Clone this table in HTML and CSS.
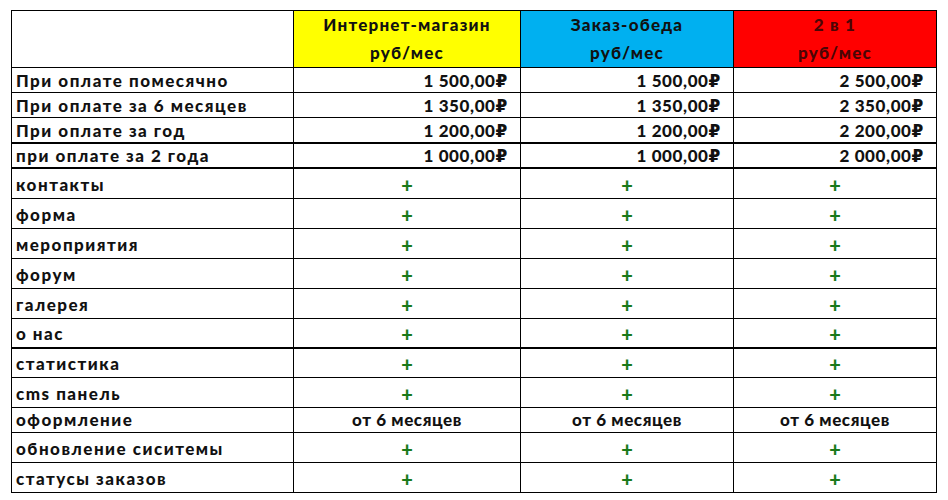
FILE: index.html
```html
<!DOCTYPE html>
<html lang="ru">
<head>
<meta charset="utf-8">
<link rel="stylesheet" href="styles.css">
</head>
<body>
<table class="price">
  <colgroup>
    <col class="c-label"><col class="c-shop"><col class="c-food"><col class="c-both">
  </colgroup>
  <thead>
    <tr class="head">
      <th></th>
      <th class="h-shop"><div>Интернет-магазин</div><div>руб/мес</div></th>
      <th class="h-food"><div>Заказ-обеда</div><div>руб/мес</div></th>
      <th class="h-both"><div>2 в 1</div><div>руб/мес</div></th>
    </tr>
  </thead>
  <tbody>
    <tr class="pr"><td>При оплате помесячно</td><td class="num">1 500,00₽</td><td class="num">1 500,00₽</td><td class="num">2 500,00₽</td></tr>
    <tr class="pr"><td>При оплате за 6 месяцев</td><td class="num">1 350,00₽</td><td class="num">1 350,00₽</td><td class="num">2 350,00₽</td></tr>
    <tr class="pr"><td>При оплате за год</td><td class="num">1 200,00₽</td><td class="num">1 200,00₽</td><td class="num">2 200,00₽</td></tr>
    <tr class="pr pr-thick thick-top thick-bottom"><td>при оплате за 2 года</td><td class="num">1 000,00₽</td><td class="num">1 000,00₽</td><td class="num">2 000,00₽</td></tr>
    <tr class="ft"><td>контакты</td><td class="yes">+</td><td class="yes">+</td><td class="yes">+</td></tr>
    <tr class="ft"><td>форма</td><td class="yes">+</td><td class="yes">+</td><td class="yes">+</td></tr>
    <tr class="ft"><td>мероприятия</td><td class="yes">+</td><td class="yes">+</td><td class="yes">+</td></tr>
    <tr class="ft"><td>форум</td><td class="yes">+</td><td class="yes">+</td><td class="yes">+</td></tr>
    <tr class="ft"><td>галерея</td><td class="yes">+</td><td class="yes">+</td><td class="yes">+</td></tr>
    <tr class="ft ft-short thick-bottom"><td>о нас</td><td class="yes">+</td><td class="yes">+</td><td class="yes">+</td></tr>
    <tr class="ft ft-short"><td>статистика</td><td class="yes">+</td><td class="yes">+</td><td class="yes">+</td></tr>
    <tr class="ft"><td>cms панель</td><td class="yes">+</td><td class="yes">+</td><td class="yes">+</td></tr>
    <tr class="ft ft-mid"><td>оформление</td><td class="txt">от 6 месяцев</td><td class="txt">от 6 месяцев</td><td class="txt">от 6 месяцев</td></tr>
    <tr class="ft"><td>обновление сиситемы</td><td class="yes">+</td><td class="yes">+</td><td class="yes">+</td></tr>
    <tr class="ft"><td>статусы заказов</td><td class="yes">+</td><td class="yes">+</td><td class="yes">+</td></tr>
  </tbody>
</table>
</body>
</html>
```

FILE: styles.css
```css
html, body {
  margin: 0;
  padding: 0;
  background: #ffffff;
}

body {
  font-family: "Lato", "DejaVu Sans", sans-serif;
  font-weight: 900;
  font-size: 17px;
  color: #111111;
}

.price {
  margin: 10px 0 0 11px;
  border-collapse: collapse;
  table-layout: fixed;
  width: 925px;
}

.c-label { width: 282px; }
.c-shop { width: 227px; }
.c-food { width: 213px; }
.c-both { width: 203px; }

.price th,
.price td {
  border: 1px solid #000000;
  padding: 0;
  line-height: 20px;
  vertical-align: bottom;
  overflow: hidden;
  white-space: nowrap;
}

.head th {
  height: 52px;
  font-weight: 900;
  text-align: center;
  vertical-align: middle;
  line-height: 28px;
  letter-spacing: 1.2px;
}

.h-shop { background: #ffff00; }
.h-food { background: #00b0f0; }
.h-both { background: #ff0000; color: #4a0505; }

.price td:first-child {
  padding-left: 4px;
  letter-spacing: 1.5px;
}

.pr td {
  height: 23px;
  padding-bottom: 1px;
}

.pr-thick td { height: 22px; }

.num {
  text-align: right;
  padding-right: 12px !important;
  letter-spacing: 0.6px;
}

.ft td {
  height: 26px;
  padding-bottom: 3px;
}

.ft-short td { height: 25px; }
.ft-mid td { height: 22px; padding-bottom: 2px; }

.thick-top td { border-top-width: 2px; }
.thick-bottom td { border-bottom-width: 2px; }

.yes {
  text-align: center;
  color: #1a7a1a;
  font-size: 20px;
  font-weight: 900;
}

.txt {
  text-align: center;
  letter-spacing: 0.6px;
}
```
